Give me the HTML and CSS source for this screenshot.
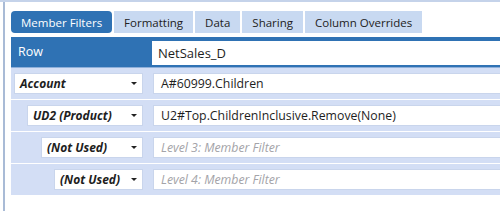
FILE: index.html
```html
<!DOCTYPE html>
<html lang="en">
<head>
    <meta charset="UTF-8">
    <meta name="viewport" content="width=device-width, initial-scale=1.0">
    <title>Member Filters</title>
    <link rel="stylesheet" href="styles.css">
</head>
<body>
    <div class="window">
        <div class="panel">
            <div class="tabs">
                <div class="tab active">Member Filters</div>
                <div class="tab">Formatting</div>
                <div class="tab">Data</div>
                <div class="tab">Sharing</div>
                <div class="tab">Column Overrides</div>
            </div>

            <div class="filter-grid">
                <div class="row-head">
                    <span class="row-label">Row</span>
                    <div class="field head-field">NetSales_D</div>
                </div>

                <div class="filter-row">
                    <div class="dim-cell level-1">
                        <div class="dim-select">Account<span class="caret"></span></div>
                    </div>
                    <div class="field">A#60999.Children</div>
                </div>

                <div class="filter-row">
                    <div class="dim-cell level-2">
                        <div class="dim-select">UD2 (Product)<span class="caret"></span></div>
                    </div>
                    <div class="field">U2#Top.ChildrenInclusive.Remove(None)</div>
                </div>

                <div class="filter-row">
                    <div class="dim-cell level-3">
                        <div class="dim-select">(Not Used)<span class="caret"></span></div>
                    </div>
                    <div class="field empty">Level 3: Member Filter</div>
                </div>

                <div class="filter-row last">
                    <div class="dim-cell level-4">
                        <div class="dim-select">(Not Used)<span class="caret"></span></div>
                    </div>
                    <div class="field empty">Level 4: Member Filter</div>
                </div>
            </div>
        </div>
    </div>
</body>
</html>
```

FILE: styles.css
```css
:root {
    --dark-blue: #2f72b4;
    --tab-blue: #c8d9f1;
    --row-blue: #d3def5;
    --frame-blue: #c5d3ea;
    --text-color: #1e1e1e;
}

* {
    box-sizing: border-box;
    margin: 0;
    padding: 0;
    font-family: 'Open Sans', 'Noto Sans', sans-serif;
}

body {
    width: 500px;
    height: 211px;
    overflow: hidden;
    background: white;
    color: var(--text-color);
}

.window {
    height: 211px;
    border-top: 2px solid var(--frame-blue);
    padding-left: 3px;
}

.panel {
    height: 100%;
    border-left: 2px solid #a9bbd6;
    padding: 9px 0 0 6px;
}

.tabs {
    display: flex;
    gap: 2px;
    height: 22px;
}

.tab {
    display: flex;
    align-items: center;
    padding: 0 10px;
    background-color: var(--tab-blue);
    font-size: 11.5px;
    color: #222;
    white-space: nowrap;
}

.tab.active {
    background-color: var(--dark-blue);
    color: white;
    border-radius: 4px;
}

.filter-grid {
    margin-top: 4px;
}

.row-head {
    display: flex;
    height: 31px;
    padding: 4px 0 3px 0;
    background-color: var(--dark-blue);
    border-bottom: 1px solid #8fb0da;
}

.row-label {
    width: 141px;
    padding: 2px 0 0 7px;
    color: white;
    font-size: 12.5px;
}

.field {
    flex: 1;
    display: flex;
    align-items: center;
    height: 21px;
    padding-left: 7px;
    background: white;
    border: 1px solid #c9d5ec;
    border-right: none;
    font-size: 12.3px;
    white-space: nowrap;
}

.head-field {
    height: 24px;
    padding-left: 6px;
    border: none;
    font-size: 13px;
}

.field.empty {
    color: #a3a3a8;
    font-style: italic;
}

.filter-row {
    display: flex;
    align-items: center;
    gap: 10px;
    height: 32px;
    background-color: var(--row-blue);
    border-bottom: 1px solid white;
}

.filter-row.last {
    height: 31px;
    border-bottom: none;
}

.dim-cell {
    width: 132px;
    flex-shrink: 0;
}

.level-1 { padding-left: 3px; }
.level-2 { padding-left: 16px; }
.level-3 { padding-left: 30px; }
.level-4 { padding-left: 43px; }

.dim-select {
    position: relative;
    display: flex;
    align-items: center;
    height: 21px;
    padding-left: 5px;
    background: white;
    border: 1px solid #c9d5ec;
    font-size: 12px;
    font-weight: bold;
    font-style: italic;
    white-space: nowrap;
}

.caret {
    position: absolute;
    right: 5px;
    top: 8px;
    border-left: 3px solid transparent;
    border-right: 3px solid transparent;
    border-top: 3px solid #222;
}
```
